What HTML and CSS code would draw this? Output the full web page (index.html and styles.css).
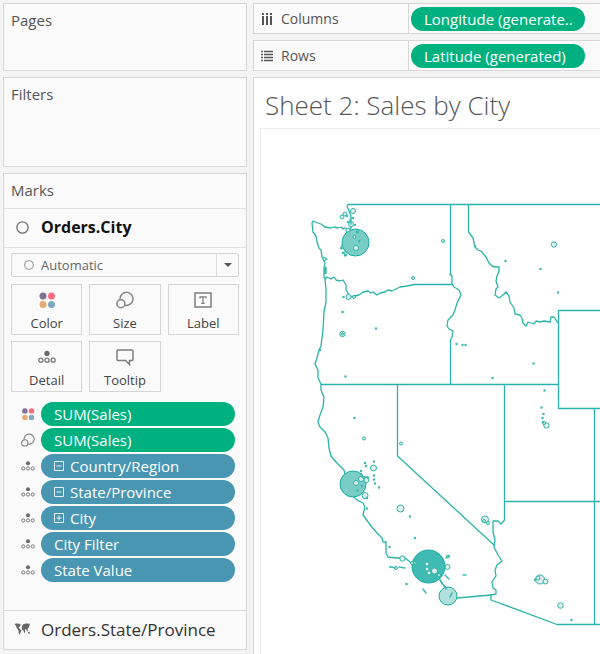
FILE: index.html
```html
<!DOCTYPE html>
<html lang="en">
<head>
  <meta charset="UTF-8" />
  <meta name="viewport" content="width=device-width, initial-scale=1.0" />
  <title>Sheet 2: Sales by City</title>
  <link rel="stylesheet" href="styles.css">
</head>
<body>
  <!-- shared icons -->
  <svg class="sprite" aria-hidden="true">
    <symbol id="icon-color" viewBox="0 0 18 18">
      <circle cx="5" cy="5" r="3.5" fill="#857094" />
      <circle cx="13.5" cy="5" r="3.5" fill="#f96d80" />
      <circle cx="5" cy="13.5" r="3.5" fill="#e5a975" />
      <circle cx="13.5" cy="13.5" r="3.5" fill="#81a7c0" />
    </symbol>
    <symbol id="icon-size" viewBox="0 0 18 18">
      <path d="M4 8.5A6.5 6.5 0 1 1 9 14.2" fill="none" stroke="#858585" stroke-width="1.5" />
      <circle cx="4.9" cy="12.7" r="4" fill="none" stroke="#858585" stroke-width="1.5" />
    </symbol>
    <symbol id="icon-detail" viewBox="0 0 20 14">
      <circle cx="10" cy="3" r="2.9" fill="#6b6b6b" />
      <g fill="none" stroke="#777" stroke-width="1.4">
        <circle cx="3.2" cy="10.5" r="2.3" />
        <circle cx="10" cy="10.5" r="2.3" />
        <circle cx="16.8" cy="10.5" r="2.3" />
      </g>
    </symbol>
    <symbol id="icon-circle" viewBox="0 0 12 12">
      <circle cx="6" cy="6" r="5.2" fill="none" stroke="currentColor" stroke-width="1.3" />
    </symbol>
    <symbol id="icon-minus" viewBox="0 0 10 10">
      <path d="M.5 .5h9v9h-9zM2.5 5h5" fill="none" stroke="#e4eff5" />
    </symbol>
    <symbol id="icon-plus" viewBox="0 0 10 10">
      <path d="M.5 .5h9v9h-9zM2.5 5h5M5 2.5v5" fill="none" stroke="#e4eff5" />
    </symbol>
  </svg>

  <div class="workspace">
    <aside class="sidebar">
      <section class="card pages">
        <h2 class="card-title">Pages</h2>
      </section>
      <section class="card filters">
        <h2 class="card-title">Filters</h2>
      </section>
      <section class="card marks">
        <h2 class="card-title marks-title">Marks</h2>
        <button type="button" class="layer layer-active">
          <svg class="layer-icon"><use href="#icon-circle" /></svg>
          Orders.City
        </button>

        <div class="marks-body">
          <div class="mark-type">
            <select class="mark-select" aria-label="Mark type">
              <option>Automatic</option>
              <option>Bar</option>
              <option>Line</option>
              <option>Map</option>
            </select>
            <svg class="mark-circle"><use href="#icon-circle" /></svg>
            <span class="mark-arrow"></span>
          </div>

          <div class="mark-buttons">
            <button type="button" class="mark-button">
              <svg class="mark-icon"><use href="#icon-color" /></svg>
              Color
            </button>
            <button type="button" class="mark-button">
              <svg class="mark-icon"><use href="#icon-size" /></svg>
              Size
            </button>
            <button type="button" class="mark-button">
              <svg class="mark-icon" viewBox="0 0 18 18" fill="none" stroke="#7d7d7d">
                <rect x="1" y="2" width="16" height="14" stroke-width="1.5" />
                <path d="M6 7.5V5.8h6v1.7M9 5.8v6.5M7.3 12.3h3.4" stroke-width="1.2" />
              </svg>
              Label
            </button>
            <button type="button" class="mark-button">
              <svg class="mark-icon"><use href="#icon-detail" /></svg>
              Detail
            </button>
            <button type="button" class="mark-button">
              <svg class="mark-icon" viewBox="0 0 18 18" fill="none" stroke="#7d7d7d" stroke-width="1.5">
                <path d="M2 2h14a1 1 0 0 1 1 1v8.5a1 1 0 0 1-1 1h-2.500v4l-4-4H2a1 1 0 0 1-1-1V3a1 1 0 0 1 1-1z" />
              </svg>
              Tooltip
            </button>
          </div>

          <ul class="fields">
            <li class="field">
              <svg class="field-icon"><use href="#icon-color" /></svg>
              <button type="button" class="pill green">SUM(Sales)</button>
            </li>
            <li class="field">
              <svg class="field-icon"><use href="#icon-size" /></svg>
              <button type="button" class="pill green">SUM(Sales)</button>
            </li>
            <li class="field">
              <svg class="field-icon"><use href="#icon-detail" /></svg>
              <button type="button" class="pill blue"><svg class="expander"><use href="#icon-minus" /></svg>Country/Region</button>
            </li>
            <li class="field">
              <svg class="field-icon"><use href="#icon-detail" /></svg>
              <button type="button" class="pill blue"><svg class="expander"><use href="#icon-minus" /></svg>State/Province</button>
            </li>
            <li class="field">
              <svg class="field-icon"><use href="#icon-detail" /></svg>
              <button type="button" class="pill blue"><svg class="expander"><use href="#icon-plus" /></svg>City</button>
            </li>
            <li class="field">
              <svg class="field-icon"><use href="#icon-detail" /></svg>
              <button type="button" class="pill blue">City Filter</button>
            </li>
            <li class="field">
              <svg class="field-icon"><use href="#icon-detail" /></svg>
              <button type="button" class="pill blue">State Value</button>
            </li>
          </ul>
        </div>

        <button type="button" class="layer layer-bottom">
          <svg class="layer-icon layer-map" viewBox="0 0 16 12" fill="#666">
            <path d="M0 1l2-.6 3 .3L6.5 2 5 3.5 4 5l1.5 1L7 7.5 6 9.5 5 12l-.8-2L4 7.5 2.500 5.500 1.500 3z" />
            <path d="M7.5 3L9 1.2 11 .6l4.500 .2-.6 2L14 5l-1 1.500 .5 2.200-1.200-1L11.5 6l-1 .4 .3 2L9.800 10.500 9 7.500 7.300 6.500z" />
            <path d="M13.5 9l2 .2-.5 1.500-1.500-.4z" />
          </svg>
          Orders.State/Province
        </button>
      </section>
    </aside>

    <main class="main">
      <div class="shelf">
        <div class="shelf-name">
          <svg class="shelf-icon" viewBox="0 0 12 12" stroke="#555" stroke-width="2">
            <path d="M2 0v2M6 0v2M10 0v2M2 3v9M6 3v9M10 3v9" />
          </svg>
          Columns
        </div>
        <button type="button" class="pill green shelf-pill">Longitude (generate..</button>
      </div>
      <div class="shelf">
        <div class="shelf-name">
          <svg class="shelf-icon" viewBox="0 0 12 12" stroke="#555" stroke-width="1.4">
            <path d="M0 1.5h2M3 1.5h9M0 4.5h2M3 4.5h9M0 7.5h2M3 7.5h9M0 10.5h2M3 10.5h9" />
          </svg>
          Rows
        </div>
        <button type="button" class="pill green shelf-pill">Latitude (generated)</button>
      </div>

      <section class="sheet">
        <h1 class="sheet-title">Sheet 2: Sales by City</h1>
        <div class="view">
          <svg class="map" viewBox="261 129 339 525" preserveAspectRatio="xMinYMin slice" role="img" aria-label="Map of sales by city">
            <g class="borders">
              <!-- Washington -->
              <path d="M600 204.500H348L347 206L349 211L351 216L350 221L352 226L349 230L345 228L343 229L341 227L338 228L334 227L331 228L325 227L321 224L318 223L313 221L312 223L313 232L316 236L317 242L319 248L321 250L322 257L325 263L324 268L324 277L325 279" />
              <path d="M323 257L327 259L324 261M326 267V274M325 267V274" />
              <path d="M325 279L327 277L331 279L334 277L336 280L340 281L343 280L346 285L346 290L348 293L349 297L355 296L359 295L363 292L368 291L371 293L373 292L377 295L380 293L385 292L388 290L392 291L396 289L400 287L407 286L415 284.500H452" />
              <path d="M450.500 204V274L452 276L452 284L454 287L459 290L461 295L459 299L457 303L455 310L453 315L448 320L447 326L449 329L453 331L452 337L450.500 340V384" />
              <!-- Oregon -->
              <path d="M325 279L326 290L326 302L324 312L323 330L321 346L319 350L317 358L315 364L318 370L318 378L321 384" />
              <path d="M321 384.500H558.500" />
              <!-- Idaho, Montana, Wyoming -->
              <path d="M468.500 204V232L473 238L474 243L475 247L478 250L481 251L486 257L489 263L492 266L496 267L499 267L499 271L497 276L496 281L498 287L496 289L495 295L499 298L503 295L506 292L509 296L510 302L514 308L515 314L520 315L522 318L523 323L526 326L528 322L534 324L536 321L540 322L544 321L550 322L551 317L554 317L558 323" />
              <path d="M600 310.500H558.500V408.500H600" />
              <!-- California -->
              <path d="M321 384L321 390L324 397L323 407L320 415L318 422L320 427L325 432L328 438L329 448L331 456L336 462L344 470L345 474M353 496L357 500L363 503L365 507L363 515L371 526L377 533L382 538L383 542L386 543L386 553L388 557L396 558L405 558L410 562L413 564M439 578L443 584L446 588M457 598L491 595" />
              <!-- Nevada, Utah, Arizona -->
              <path d="M397.500 384V456L494 545" />
              <path d="M504.500 384V520L501 524L498 521L493 521L493 532L495 540L494 547L498 555L502 561L497 565L495 570L496 576L492 582L493 588L496 590L496 594L491 595L491 600L557 624.500H600" />
              <path d="M504 501.500H600M594.500 408V624" />
            </g>
            <g class="bubbles">
              <circle cx="355.5" cy="242.5" r="13.5" />
              <circle cx="353" cy="484" r="13" />
              <circle class="strong" cx="428.5" cy="566.5" r="16.5" />
              <circle class="light" cx="448" cy="596" r="9" />
            </g>
            <g class="rings">
              <circle cx="353" cy="211" r="2.5" />
              <circle cx="345" cy="214" r="2" />
              <circle cx="342" cy="217" r="2" />
              <circle cx="351" cy="224" r="2.5" />
              <circle cx="348" cy="230" r="2" />
              <circle cx="354.5" cy="237" r="1.5" />
              <circle cx="356" cy="248" r="2.5" />
              <circle cx="443" cy="241" r="1.5" />
              <circle cx="413" cy="278" r="1.5" />
              <circle cx="348.5" cy="297" r="2.5" />
              <circle cx="354" cy="297" r="1.5" />
              <circle cx="342.5" cy="334" r="2.7" />
              <circle cx="342.5" cy="334" r="1" />
              <circle cx="554" cy="244.5" r="2.7" />
              <circle cx="546.5" cy="425.5" r="2.7" />
              <circle cx="544" cy="423" r="1.5" />
              <circle cx="364" cy="438.5" r="1.5" />
              <circle cx="401" cy="443.5" r="1.5" />
              <circle cx="373.5" cy="468" r="3" />
              <circle cx="356" cy="483" r="2.5" />
              <circle cx="361" cy="479" r="2.5" />
              <circle cx="366.5" cy="480" r="2.5" />
              <circle cx="365" cy="495.5" r="3" />
              <circle cx="400.5" cy="508.5" r="3.5" />
              <circle cx="402.5" cy="558.5" r="2.7" />
              <circle cx="412" cy="563" r="1.5" />
              <circle cx="415" cy="563" r="1.3" />
              <circle cx="427" cy="564" r="2" />
              <circle cx="427" cy="569" r="2" />
              <circle cx="429" cy="573" r="2" />
              <circle cx="434.5" cy="571" r="3" />
              <circle cx="439" cy="575" r="1.5" />
              <circle cx="447.5" cy="567" r="2.5" />
              <circle cx="448" cy="556.5" r="1.5" />
              <circle cx="396" cy="568" r="1.5" />
              <circle cx="485" cy="519.5" r="3.5" />
              <circle cx="484" cy="521" r="1.5" />
              <circle cx="488" cy="523" r="1.5" />
              <circle cx="540" cy="579.5" r="4.5" />
              <circle cx="538" cy="578" r="2" />
              <circle cx="545.5" cy="581.5" r="2.5" />
              <circle cx="560.5" cy="605.5" r="2.8" />
            </g>
            <!-- small cities: zero-length segments drawn as round caps -->
            <path class="dots" d="M505.500 261h0M540.500 269h0M558 292.500h0M456.500 344h0M462.500 345h0M465.500 345h0M492.500 378h0M533.500 363.500h0M544.500 390.500h0M541.500 407.500h0M543.500 414h0M542.500 418h0M543 422h0M342.500 312h0M376 328.500h0M320 350h0M345.500 376.500h0M354.500 418h0M365 463h0M366 466h0M374 461.500h0M374 475.500h0M374 479.500h0M375 483.500h0M379 487.500h0M361 471h0M361 474h0M368 478h0M362 486h0M357.500 490.500h0M367 498h0M367 508.500h0M410 516.500h0M415 538h0M385.500 542h0M389.500 547h0M390.500 567h0M406.500 584h0M571.500 620h0M535 580h0M341 248h0M343 253h0M346 255h0M357 232h0M359 241h0M353 218h0M347 216h0M348 222h0M355 225h0M450.500 274.500h0M343.500 297h0M475 246h0" />
            <path class="streaks" d="M392 567l3 1M399 567l6 1M423 589l3 4M445 575l4 4M463 575h3M450 597l2-4M446 558l3-2M342 245v4M344 252l1 4M358 231v2M359 242l1-2M351 218v6M362 477h6M440 580l2 4M444 586l2 3" />
          </svg>
        </div>
      </section>
    </main>
  </div>
</body>
</html>
```

FILE: styles.css
```css
* {
  box-sizing: border-box;
}
body {
  margin: 0;
  background-color: #f4f4f4;
  font-family: "Open Sans", "Noto Sans", sans-serif;
  font-size: 15px;
  color: #555;
}
button, select {
  font: inherit;
  color: inherit;
  margin: 0;
  cursor: pointer;
}
h1, h2 {
  margin: 0;
  font-weight: normal;
}
svg {
  display: block;
  flex: none;
}
.sprite {
  position: absolute;
  width: 0;
  height: 0;
}
.workspace {
  display: flex;
  gap: 6px;
  min-height: 100vh;
  padding-left: 3px;
}

/* left side */
.sidebar {
  display: flex;
  flex-direction: column;
  gap: 6px;
  width: 244px;
  flex: none;
  padding: 3px 0 4px;
}
.card {
  background: #fafafa;
  border: 1px solid #d6d6d6;
}
.card-title {
  padding: 7px 7px 0;
  font-size: 15px;
  line-height: 19px;
}
.pages {
  height: 68px;
}
.filters {
  height: 90px;
}
.marks {
  display: flex;
  flex-direction: column;
  flex: 1;
}
.marks-title {
  height: 35px;
  border-bottom: 1px solid #e2e2e2;
}
.layer {
  display: flex;
  align-items: center;
  gap: 12px;
  height: 39px;
  padding: 0 12px 2px;
  border: 0;
  background: none;
  font-size: 17px;
  color: #333;
}
.layer-active {
  border-bottom: 1px solid #e2e2e2;
  font-size: 16px;
  font-weight: bold;
  color: #111;
}
.layer-bottom {
  gap: 10px;
  padding-left: 10px;
  border-top: 1px solid #dcdcdc;
}
.layer-icon {
  width: 13px;
  height: 13px;
  color: #777;
}
.layer-map {
  width: 17px;
  height: 12px;
}
.marks-body {
  flex: 1;
  padding: 5px 7px;
}
.mark-type {
  display: grid;
  grid-template-columns: 30px 1fr 22px;
  align-items: center;
  height: 24px;
  border: 1px solid #d4d4d4;
  border-radius: 2px;
}
.mark-select {
  grid-area: 1 / 1 / 2 / 4;
  height: 22px;
  padding: 0 22px 0 29px;
  border: 0;
  background: none;
  appearance: none;
  font-size: 13px;
  color: #666;
}
.mark-circle {
  grid-area: 1 / 1;
  width: 10px;
  height: 10px;
  margin-left: 12px;
  color: #999;
  pointer-events: none;
}
.mark-arrow {
  display: flex;
  grid-area: 1 / 3;
  align-items: center;
  justify-content: center;
  height: 22px;
  border-left: 1px solid #dcdcdc;
  pointer-events: none;
}
.mark-arrow::after {
  content: "";
  border: 4px solid transparent;
  border-top: 4px solid #555;
  border-bottom: 0;
}
.mark-buttons {
  display: grid;
  grid-template-columns: repeat(3, 1fr);
  gap: 6px 7px;
  margin-top: 7px;
}
.mark-button {
  display: flex;
  flex-direction: column;
  align-items: center;
  gap: 5px;
  height: 51px;
  padding: 6px 0 0;
  border: 1px solid #d6d6d6;
  background: none;
  font-size: 13px;
  line-height: 18px;
  color: #444;
}
.mark-icon {
  width: 18px;
  height: 18px;
}
.fields {
  display: grid;
  gap: 2px;
  margin: 10px 0 0;
  padding: 0 4px 0 10px;
  list-style: none;
}
.field {
  display: flex;
  align-items: center;
  gap: 6px;
}
.field-icon {
  width: 14px;
  height: 14px;
}
.pill {
  display: flex;
  flex: 1;
  align-items: center;
  height: 24px;
  padding: 0 13px;
  border: 0;
  border-radius: 12px;
  font-size: 15px;
  font-weight: 500;
  white-space: nowrap;
  color: #fff;
}
.green {
  background: #00b180;
}
.blue {
  background: #4996b2;
}
.expander {
  width: 10px;
  height: 10px;
  margin-right: 6px;
}

/* right side */
.main {
  display: flex;
  flex-direction: column;
  gap: 6px;
  flex: 1;
  min-width: 0;
  padding-top: 3px;
}
.shelf {
  display: flex;
  align-items: center;
  height: 31px;
  border: 1px solid #d6d6d6;
  border-right: 0;
  background: #fafafa;
}
.shelf-name {
  display: flex;
  align-items: center;
  gap: 8px;
  width: 155px;
  height: 29px;
  padding-left: 7px;
  border-right: 1px solid #d6d6d6;
  font-size: 14px;
}
.shelf-icon {
  width: 12px;
  height: 12px;
}
.shelf-pill {
  flex: none;
  width: 174px;
  margin-left: 2px;
}
.sheet {
  display: flex;
  flex-direction: column;
  flex: 1;
  padding-left: 6px;
  border: 1px solid #d6d6d6;
  border-width: 1px 0 0 1px;
  background: #fff;
}
.sheet-title {
  padding: 12px 5px 8px;
  font-size: 26px;
  font-weight: 300;
  line-height: 30px;
  color: #555;
}
.view {
  flex: 1;
  border: 1px solid #ebebeb;
  border-width: 1px 0 0 1px;
}
.map {
  width: 100%;
}
.borders {
  fill: none;
  stroke: #2bb3aa;
  stroke-width: 1.3;
  stroke-linejoin: round;
}
.bubbles {
  fill: #7accc6;
  stroke: #14ada2;
}
.strong {
  fill: #40bbb3;
}
.light {
  fill: #b0dfdc;
}
.rings {
  fill: #e3eeed;
  stroke: #2bb3aa;
}
.dots {
  fill: none;
  stroke: #3fbab2;
  stroke-width: 2.5;
  stroke-linecap: round;
}
.streaks {
  fill: none;
  stroke: #3fbab2;
  stroke-width: 1.5;
  stroke-linecap: round;
}
```
